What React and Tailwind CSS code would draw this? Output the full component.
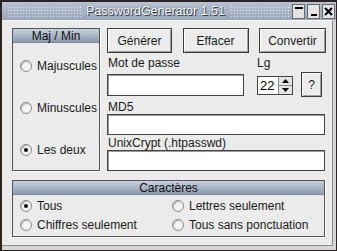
import React from "react";

const font = { fontFamily: '"Liberation Sans", Arial, sans-serif' };

function Radio({ checked, label, className = "" }) {
  return (
    <div className={`flex items-center gap-[5px] ${className}`}>
      <div className="w-[12px] h-[12px] rounded-full border border-[#8a8a8a] bg-[#f4f4f4] flex items-center justify-center shadow-[inset_1px_1px_1px_rgba(0,0,0,0.25)]">
        {checked && <div className="w-[4px] h-[4px] rounded-full bg-black" />}
      </div>
      <span className="text-[12px] leading-[14px] text-[#1a1a1a]">{label}</span>
    </div>
  );
}

function Button({ children, className = "" }) {
  return (
    <div className={`border border-[#3c3c3c] bg-[#ececec] flex items-center justify-center text-[12px] text-[#1a1a1a] shadow-[inset_1px_1px_0_#ffffff,inset_-1px_-1px_0_#a0a0a0] ${className}`}>
      {children}
    </div>
  );
}

function Field({ className = "" }) {
  return <div className={`border border-[#444] bg-white shadow-[inset_1px_1px_0_#9a9a9a] ${className}`} />;
}

function Header({ children }) {
  return (
    <div className="h-[14px] bg-gradient-to-b from-[#c9d1dd] to-[#8e9bb0] border-b border-[#7a879c] flex items-center justify-center text-[12px] leading-[14px] text-[#111]">
      {children}
    </div>
  );
}

function Dots({ className = "" }) {
  return (
    <div
      className={`h-[11px] ${className}`}
      style={{
        backgroundImage: "radial-gradient(circle, #e6ebf2 0.8px, transparent 1px)",
        backgroundSize: "3px 3px",
      }}
    />
  );
}

export default function App() {
  return (
    <div style={font} className="w-[337px] h-[251px] bg-[#2e2222] pl-[2px] pt-[2px] pr-[1px] pb-[1px] flex flex-col overflow-hidden">
      {/* Title bar */}
      <div className="h-[18px] bg-gradient-to-b from-[#b8c2d2] to-[#9aa6ba] flex items-center pl-[5px] pr-[1px] gap-[3px] shrink-0">
        <Dots className="w-[74px]" />
        <div
          className="text-[12.5px] text-white px-[2px] whitespace-nowrap"
          style={{ textShadow: "1px 1px 0 #3a3f4a, 0 0 1px #3a3f4a" }}
        >
          PasswordGenerator 1.51
        </div>
        <Dots className="flex-1" />
        <div className="flex gap-[2px]">
          <div className="w-[13px] h-[15px] bg-[#e4e4e4] border border-[#6a6a6a] flex justify-center pt-[2px]">
            <div className="w-[8px] h-[2px] bg-black" />
          </div>
          <div className="w-[13px] h-[15px] bg-[#e4e4e4] border border-[#6a6a6a] flex justify-center items-end pb-[2px]">
            <div className="w-[6px] h-[2px] bg-black" />
          </div>
          <div className="w-[13px] h-[15px] bg-[#e4e4e4] border border-[#6a6a6a] flex justify-center items-center">
            <svg width="9" height="9" viewBox="0 0 9 9">
              <path d="M1 1L8 8M8 1L1 8" stroke="black" strokeWidth="2" />
            </svg>
          </div>
        </div>
      </div>

      {/* Frame */}
      <div className="flex-1 bg-[#d6d6d6] pr-[3px] pb-[4px] flex flex-col">
        {/* Content */}
        <div className="flex-1 bg-[#ebebeb] border-t border-[#f8f8f8] border-b border-r border-b-[#8c8c8c] border-r-[#8c8c8c] pt-[7px] pl-[10px] pr-[6px] flex flex-col">
          <div className="flex gap-[7px] items-start">
            {/* Maj / Min */}
            <div className="w-[88px] h-[143px] border border-[#555] flex flex-col shadow-[1px_1px_0_#ffffff]">
              <Header>Maj / Min</Header>
              <div className="flex-1 flex flex-col pl-[7px] pt-[16px] gap-[28px]">
                <Radio label="Majuscules" />
                <Radio label="Minuscules" />
                <Radio label="Les deux" checked />
              </div>
            </div>

            {/* Right column */}
            <div className="w-[219px] flex flex-col">
              <div className="flex justify-between h-[25px]">
                <Button className="w-[65px]">Générer</Button>
                <Button className="w-[66px]">Effacer</Button>
                <Button className="w-[67px]">Convertir</Button>
              </div>
              <div className="flex mt-[3px]">
                <div className="flex flex-col w-[150px]">
                  <span className="text-[12px] leading-[14px] text-[#1a1a1a] h-[14px] pl-[1px]">Mot de passe</span>
                  <Field className="w-[137px] h-[22px] mt-[4px]" />
                </div>
                <div className="flex flex-col w-[44px]">
                  <span className="text-[12px] leading-[14px] text-[#1a1a1a] h-[14px]">Lg</span>
                  <div className="w-[36px] h-[19px] mt-[6px] border border-[#444] bg-white flex items-center">
                    <span className="text-[13px] leading-[14px] text-black pl-[2px] flex-1">22</span>
                    <div className="w-[14px] h-full flex flex-col bg-[#e4e4e4] border-l border-[#888]">
                      <div className="flex-1 flex items-center justify-center border-b border-[#888]">
                        <svg width="7" height="4" viewBox="0 0 7 4"><path d="M0 4L3.5 0L7 4Z" fill="black" /></svg>
                      </div>
                      <div className="flex-1 flex items-center justify-center">
                        <svg width="7" height="4" viewBox="0 0 7 4"><path d="M0 0L3.5 4L7 0Z" fill="black" /></svg>
                      </div>
                    </div>
                  </div>
                </div>
                <Button className="w-[21px] h-[25px] mt-[16px]">?</Button>
              </div>
              <span className="text-[12px] leading-[13px] text-[#1a1a1a] mt-[4px] pl-[1px]">MD5</span>
              <Field className="w-[218px] h-[21px]" />
              <span className="text-[12px] leading-[13px] text-[#1a1a1a] mt-[2px] pl-[1px]">UnixCrypt (.htpasswd)</span>
              <Field className="w-[218px] h-[21px]" />
            </div>
          </div>

          {/* Caractères */}
          <div className="w-[313px] h-[57px] mt-[9px] border border-[#555] flex flex-col shadow-[1px_1px_0_#ffffff]">
            <Header>Caractères</Header>
            <div className="grid grid-cols-[152px_1fr] pl-[7px] pt-[4px] gap-y-[5px]">
              <Radio label="Tous" checked />
              <Radio label="Lettres seulement" />
              <Radio label="Chiffres seulement" />
              <Radio label="Tous sans ponctuation" />
            </div>
          </div>
        </div>
      </div>
    </div>
  );
}
